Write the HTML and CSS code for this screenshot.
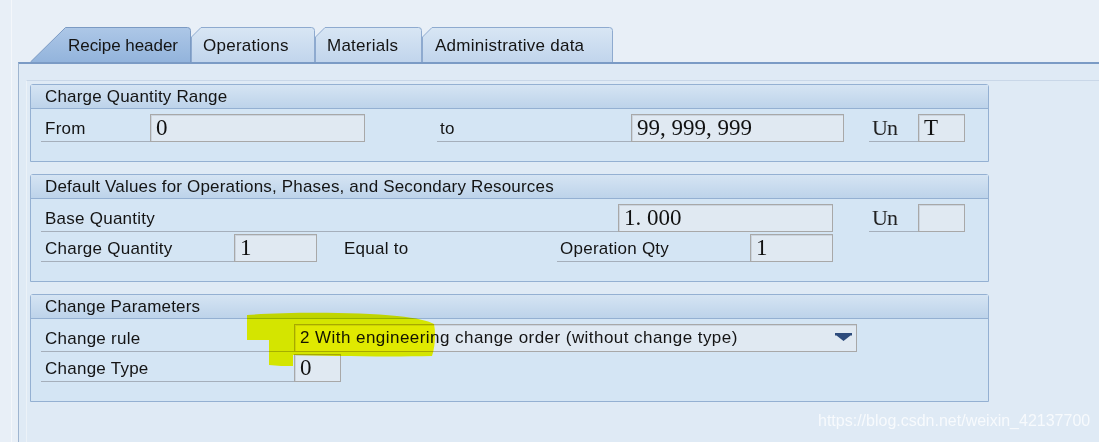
FILE: index.html
```html
<!DOCTYPE html>
<html lang="en">
<head>
<meta charset="utf-8">
<title>Recipe header</title>
<link rel="stylesheet" href="styles.css">
</head>
<body>
<div class="screen">
  <div class="frame">
    <div class="tabs">
      <div class="tab tab-recipe">
        <svg class="tab-bg" width="161" height="35" viewBox="0 0 161 35"><defs><linearGradient id="gA" x1="0" y1="0" x2="0" y2="1"><stop offset="0" stop-color="#adc7e7"/><stop offset="1" stop-color="#93b4dc"/></linearGradient></defs><path d="M0.5 35 L35.5 0.5 H157.5 Q160.5 0.5 160.5 3.5 V35" fill="url(#gA)" stroke="#7b9ac3"/></svg>
        <span class="tab-label">Recipe header</span>
      </div>
      <div class="tab tab-ops">
        <svg class="tab-bg" width="124" height="35" viewBox="0 0 124 35"><defs><linearGradient id="gB" x1="0" y1="0" x2="0" y2="1"><stop offset="0" stop-color="#d8e6f4"/><stop offset="1" stop-color="#c1d5ec"/></linearGradient></defs><path d="M0.5 35 V10 L10 0.5 H120.5 Q123.5 0.5 123.5 3.5 V35" fill="url(#gB)" stroke="#8eaacf"/></svg>
        <span class="tab-label">Operations</span>
      </div>
      <div class="tab tab-mat">
        <svg class="tab-bg" width="107" height="35" viewBox="0 0 107 35"><defs><linearGradient id="gC" x1="0" y1="0" x2="0" y2="1"><stop offset="0" stop-color="#d8e6f4"/><stop offset="1" stop-color="#c1d5ec"/></linearGradient></defs><path d="M0.5 35 V10 L10 0.5 H103.5 Q106.5 0.5 106.5 3.5 V35" fill="url(#gC)" stroke="#8eaacf"/></svg>
        <span class="tab-label">Materials</span>
      </div>
      <div class="tab tab-admin">
        <svg class="tab-bg" width="191" height="35" viewBox="0 0 191 35"><defs><linearGradient id="gD" x1="0" y1="0" x2="0" y2="1"><stop offset="0" stop-color="#d8e6f4"/><stop offset="1" stop-color="#c1d5ec"/></linearGradient></defs><path d="M0.5 35 V10 L10 0.5 H187.5 Q190.5 0.5 190.5 3.5 V35" fill="url(#gD)" stroke="#8eaacf"/></svg>
        <span class="tab-label">Administrative data</span>
      </div>
    </div>

    <div class="panel">
      <div class="inner">
        <section class="group">
          <div class="group-title">Charge Quantity Range</div>
          <div class="group-body">
            <div class="row">
              <span class="lbl w-from">From</span>
              <span class="fld w-from-f">0</span>
              <span class="lbl w-to">to</span>
              <span class="fld w-to-f">99, 999, 999</span>
              <span class="lbl serif w-un m-un1">Un</span>
              <span class="fld w-un-f">T</span>
            </div>
          </div>
        </section>

        <section class="group">
          <div class="group-title">Default Values for Operations, Phases, and Secondary Resources</div>
          <div class="group-body">
            <div class="row">
              <span class="lbl w-base">Base Quantity</span>
              <span class="fld w-base-f">1. 000</span>
              <span class="lbl serif w-un m-un2">Un</span>
              <span class="fld w-un-f"></span>
            </div>
            <div class="row">
              <span class="lbl w-charge">Charge Quantity</span>
              <span class="fld w-small">1</span>
              <span class="lbl plain w-equal">Equal to</span>
              <span class="lbl w-opqty">Operation Qty</span>
              <span class="fld w-small">1</span>
            </div>
          </div>
        </section>

        <section class="group">
          <div class="group-title">Change Parameters</div>
          <div class="group-body">
            <div class="row">
              <span class="lbl w-change">Change rule</span>
              <span class="dropdown">
                <span class="dd-text">2 With engineering change order (without change type)</span>
                <svg class="dd-arrow" width="17" height="8" viewBox="0 0 17 8"><path d="M0 0 H17 V2.5 H15.5 L8.5 8 L1.5 2.5 H0 Z" fill="#2d4b7c"/></svg>
              </span>
            </div>
            <div class="row">
              <span class="lbl w-change">Change Type</span>
              <span class="fld w-type-f">0</span>
            </div>
          </div>
        </section>
      </div>
    </div>
  </div>

  <svg class="highlight" width="190" height="56" viewBox="0 0 190 56"><path d="M0 3 C40 0 110 0 150 4 C170 6 182 9 187 12 C189 22 188 35 185 44 C140 45 80 44 46 43 L46 54 C38 54 30 54 22 53 L22 28 L0 28 Z" fill="#ffff00"/></svg>
  <div class="watermark">https://blog.csdn.net/weixin_42137700</div>
</div>
</body>
</html>
```

FILE: styles.css
```css
* { box-sizing: border-box; }
html, body { margin: 0; padding: 0; }
body {
  background: #e8eff7;
  font-family: "Liberation Sans", Arial, sans-serif;
  font-size: 17px;
  letter-spacing: 0.25px;
  color: #141414;
  overflow: hidden;
}
.screen {
  position: relative;
  width: 1099px;
  height: 442px;
  padding-left: 11px;
}
.frame {
  height: 100%;
  border-left: 1px solid #f4f7fb;
  padding-left: 6px;
  display: flex;
  flex-direction: column;
}

/* tabs */
.tabs {
  height: 62px;
  flex: none;
  display: flex;
  align-items: flex-end;
  padding-left: 12px;
}
.tab {
  position: relative;
  height: 35px;
  display: flex;
  align-items: center;
  padding-top: 3px;
  flex: none;
}
.tab-bg { position: absolute; left: 0; top: 0; }
.tab-label { position: relative; white-space: nowrap; }
.tab-recipe { width: 161px; padding-left: 38px; letter-spacing: -0.05px; }
.tab-ops { width: 124px; padding-left: 12px; }
.tab-mat { width: 107px; padding-left: 12px; }
.tab-admin { width: 191px; padding-left: 13px; }

/* panel */
.panel {
  flex: 1;
  background: #dfeaf5;
  border-top: 2px solid #7b9bc5;
  border-left: 1px solid #9fb5d0;
  padding: 16px 0 0 7px;
  display: flex;
  flex-direction: column;
}
.inner {
  flex: 1;
  border-top: 1px solid #c9d7e8;
  border-left: 1px solid #ecf2f8;
  padding: 3px 0 0 3px;
  display: flex;
  flex-direction: column;
  gap: 12px;
}

/* groups */
.group {
  width: 959px;
  border: 1px solid #94b0d2;
  border-radius: 3px 3px 0 0;
  background: #d4e5f4;
}
.group-title {
  height: 24px;
  border-bottom: 1px solid #94b0d2;
  background: linear-gradient(#d5e4f3, #bdd3ea);
  padding-left: 14px;
  line-height: 23px;
  white-space: nowrap;
  letter-spacing: 0.18px;
}
.group-body {
  padding: 5px 0 19px 10px;
  display: flex;
  flex-direction: column;
  gap: 2px;
}
.row {
  display: flex;
  height: 28px;
}
.lbl {
  flex: none;
  height: 28px;
  border-bottom: 1px solid #a5afbb;
  padding: 1px 0 0 4px;
  line-height: 28px;
  white-space: nowrap;
}
.lbl.plain { border-bottom: none; }
.lbl.serif {
  font-family: "Liberation Serif", "Times New Roman", serif;
  font-size: 22px;
  letter-spacing: -0.8px;
  padding-left: 3px;
  padding-top: 0;
  color: #222;
}
.fld {
  flex: none;
  height: 28px;
  border: 1px solid #a8a8a8;
  box-shadow: inset 1px 1px 0 #cbd4de;
  background: #e0e9f2;
  font-family: "Liberation Serif", "Times New Roman", serif;
  font-size: 23px;
  letter-spacing: 0;
  line-height: 26px;
  padding-left: 5px;
  color: #111;
  white-space: nowrap;
}

.w-from { width: 109px; }
.w-from-f { width: 215px; }
.w-to { width: 194px; margin-left: 72px; padding-left: 3px; }
.w-to-f { width: 213px; }
.w-un { width: 49px; }
.m-un1 { margin-left: 25px; }
.m-un2 { margin-left: 36px; }
.w-un-f { width: 47px; }
.w-base { width: 577px; }
.w-base-f { width: 215px; }
.w-charge { width: 193px; }
.w-small { width: 83px; }
.w-equal { width: 216px; margin-left: 24px; padding-left: 3px; }
.w-opqty { width: 193px; padding-left: 3px; }
.w-change { width: 253px; }
.w-type-f { width: 47px; }

.dropdown {
  flex: none;
  width: 563px;
  height: 28px;
  border: 1px solid #a8a8a8;
  box-shadow: inset 1px 1px 0 #cbd4de;
  background: #e0e9f2;
  display: flex;
  align-items: center;
  justify-content: space-between;
  padding: 0 4px 0 5px;
}
.dd-text { white-space: nowrap; letter-spacing: 0.45px; }
.dd-arrow { margin-top: -3px; }

/* overlays */
.highlight {
  position: absolute;
  left: 247px;
  top: 312px;
  mix-blend-mode: multiply;
}
.watermark {
  position: absolute;
  left: 818px;
  top: 412px;
  font-family: "Liberation Sans", Arial, sans-serif;
  font-size: 16px;
  letter-spacing: 0;
  color: rgba(255, 255, 255, 0.75);
  white-space: nowrap;
}
```
